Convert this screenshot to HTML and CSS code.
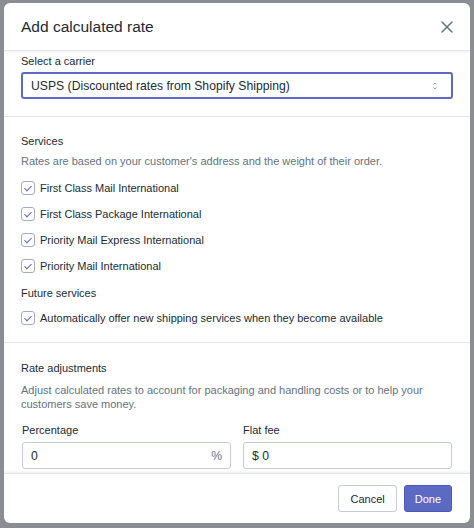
FILE: index.html
```html
<!DOCTYPE html>
<html lang="en-US">
<head>
    <meta charset="UTF-8">
    <meta name="viewport" content="width=device-width, initial-scale=1.0">
    <title>Add calculated rate</title>
    <link rel="stylesheet" href="styles.css">
</head>
<body>
    <div class="modal">
        <div class="modal-header">
            <h2 class="modal-title">Add calculated rate</h2>
            <button class="close-button" aria-label="Close">
                <svg width="14" height="14" viewBox="0 0 14 14">
                    <path d="M2 2 L12 12 M12 2 L2 12" stroke="#637381" stroke-width="1.5" stroke-linecap="round"/>
                </svg>
            </button>
        </div>

        <div class="modal-body">
            <div class="section section-carrier">
                <label class="field-label">Select a carrier</label>
                <div class="select">
                    <span>USPS (Discounted rates from Shopify Shipping)</span>
                    <svg class="select-arrows" width="6" height="10" viewBox="0 0 6 10">
                        <path d="M1.5 3.5 L3 2 L4.5 3.5 M1.5 6.5 L3 8 L4.5 6.5" fill="none" stroke="#919eab" stroke-width="1"/>
                    </svg>
                </div>
            </div>

            <div class="section section-services">
                <div class="section-title">Services</div>
                <p class="help-text">Rates are based on your customer's address and the weight of their order.</p>
                <ul class="checkbox-list">
                    <li><span class="checkbox"></span>First Class Mail International</li>
                    <li><span class="checkbox"></span>First Class Package International</li>
                    <li><span class="checkbox"></span>Priority Mail Express International</li>
                    <li><span class="checkbox"></span>Priority Mail International</li>
                </ul>
                <div class="section-title">Future services</div>
                <ul class="checkbox-list">
                    <li><span class="checkbox"></span>Automatically offer new shipping services when they become available</li>
                </ul>
            </div>

            <div class="section section-rates">
                <div class="section-title">Rate adjustments</div>
                <p class="help-text help-wrap">Adjust calculated rates to account for packaging and handling costs or to help your customers save money.</p>
                <div class="field-row">
                    <div class="field">
                        <label class="field-label">Percentage</label>
                        <div class="input">
                            <span>0</span>
                            <span class="suffix">%</span>
                        </div>
                    </div>
                    <div class="field">
                        <label class="field-label">Flat fee</label>
                        <div class="input">
                            <span>$ 0</span>
                        </div>
                    </div>
                </div>
            </div>
        </div>

        <div class="modal-footer">
            <button class="btn">Cancel</button>
            <button class="btn btn-primary">Done</button>
        </div>
    </div>
</body>
</html>
```

FILE: styles.css
```css
:root {
    --ink: #212b36;
    --ink-light: #637381;
    --border: #c4cdd5;
    --divider: #e3e6ea;
    --indigo: #5c6ac4;
}

* {
    margin: 0;
    padding: 0;
    box-sizing: border-box;
}

body {
    font-family: "Liberation Sans", Arial, sans-serif;
    font-size: 11px;
    line-height: 16px;
    color: var(--ink);
    background: #8b8d95;
    padding: 3px 4px 5px 4px;
}

.modal {
    height: 520px;
    background: #fff;
    border-radius: 6px;
    overflow: hidden;
    display: flex;
    flex-direction: column;
}

.modal-header {
    height: 48px;
    flex-shrink: 0;
    padding: 0 17px;
    display: flex;
    align-items: center;
    justify-content: space-between;
    border-bottom: 1px solid var(--divider);
    box-shadow: 0 1px 3px rgba(33, 43, 54, 0.08);
    position: relative;
}

.modal-title {
    font-size: 15.5px;
    font-weight: 400;
    margin-top: 1px;
}

.close-button {
    border: none;
    background: none;
    width: 20px;
    height: 20px;
    display: flex;
    align-items: center;
    justify-content: center;
    margin-right: -4px;
}

.modal-body {
    flex: 1;
    overflow: hidden;
}

.section {
    padding: 16px 17px 11px;
    border-bottom: 1px solid var(--divider);
}

.section-carrier {
    padding-top: 3px;
    padding-bottom: 17px;
}

.section-carrier .field-label {
    line-height: 14px;
    margin-bottom: 4px;
}

.section-rates {
    padding-top: 17px;
    border-bottom: none;
}

.field-label {
    display: block;
    margin-bottom: 4px;
}

/* focused select */
.select {
    height: 27px;
    border: 2px solid var(--indigo);
    border-radius: 3px;
    display: flex;
    align-items: center;
    justify-content: space-between;
    padding: 0 13px 0 8px;
    font-size: 12.2px;
}

.section-title {
    margin-bottom: 4px;
}

.help-text {
    color: var(--ink-light);
}

.help-wrap {
    line-height: 14px;
    margin-top: 7px;
}

.checkbox-list {
    list-style: none;
    margin: 6px 0;
}

.section-services .checkbox-list:last-child {
    margin: 4px 0 0;
}

.checkbox-list li {
    display: flex;
    align-items: center;
    gap: 5px;
    height: 26px;
}

.checkbox {
    width: 14px;
    height: 14px;
    border: 1px solid #a3abcb;
    border-radius: 3px;
    position: relative;
}

.checkbox::after {
    content: "";
    position: absolute;
    left: 4px;
    top: 1.5px;
    width: 3px;
    height: 6px;
    border: solid var(--indigo);
    border-width: 0 1.5px 1.5px 0;
    transform: rotate(45deg);
}

.field-row {
    display: grid;
    grid-template-columns: 1fr 1fr;
    gap: 12px;
    margin-top: 11px;
    padding: 0 1px;
}

.input {
    height: 27px;
    border: 1px solid var(--border);
    border-radius: 3px;
    display: flex;
    align-items: center;
    justify-content: space-between;
    padding: 0 8px;
    font-size: 12.2px;
}

.suffix {
    color: var(--ink-light);
}

.modal-footer {
    height: 50px;
    flex-shrink: 0;
    padding: 0 18px;
    display: flex;
    align-items: center;
    justify-content: flex-end;
    gap: 7px;
    border-top: 1px solid var(--divider);
    box-shadow: 0 -1px 3px rgba(33, 43, 54, 0.08);
    position: relative;
}

.btn {
    font-family: inherit;
    font-size: 11px;
    height: 27px;
    padding: 0 11px;
    border: 1px solid var(--border);
    border-radius: 3px;
    background: #fff;
    color: var(--ink);
}

.btn-primary {
    padding: 0 10px;
    background: var(--indigo);
    border-color: #4b59b6;
    color: #fff;
}
```
